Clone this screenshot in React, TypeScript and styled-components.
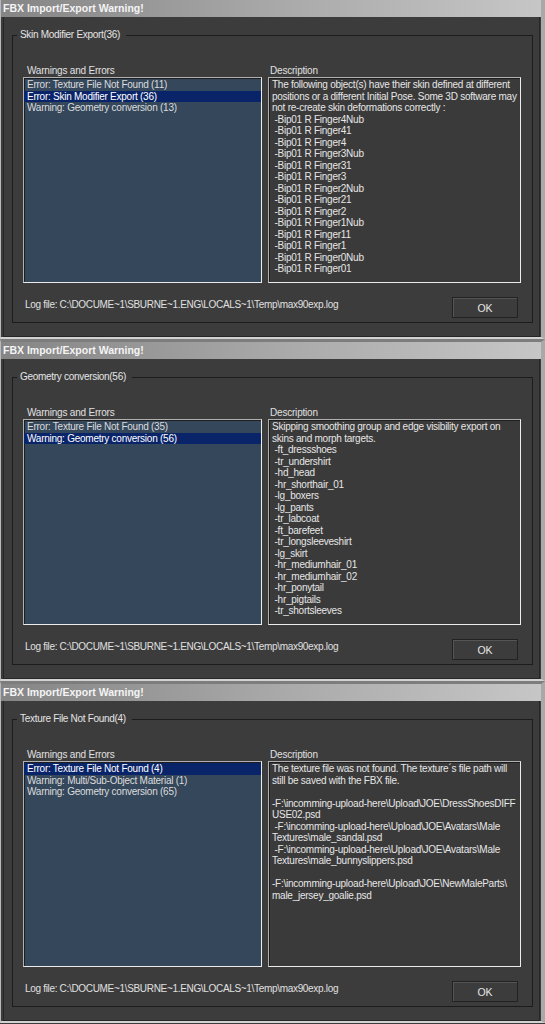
import React from 'react'
import styled, { createGlobalStyle } from 'styled-components'

const GlobalStyle = createGlobalStyle`
	html, body {
		margin: 0;
		padding: 0;
		background: #3c3c3c;
		overflow: hidden;
	}
	body {
		font-family: 'Liberation Sans', Arial, sans-serif;
	}
`

const Stack = styled.div`
	display: flex;
	flex-direction: column;
	width: 545px;
	margin-top: -3px;
`

const Window = styled.section`
	box-sizing: border-box;
	height: 342px;
	display: flex;
	flex-direction: column;
	background: #3c3c3c;
	border-top: 3px solid #7d7d7d;
	border-left: 1px solid #b9b9b9;
	border-right: 4px solid #a9a9a9;
	border-bottom: 2px solid #d2d2d2;
`

const TitleBar = styled.div`
	height: 17px;
	flex: none;
	padding-left: 2px;
	background: linear-gradient(90deg, #858585 0%, #a8a8a8 50%, #c6c6c6 100%);
	color: #f4f4f4;
	font-weight: bold;
	font-size: 10.5px;
	line-height: 17px;
	white-space: nowrap;
`

const Body = styled.div`
	box-sizing: border-box;
	height: 320px;
	margin: 0 1px 0 2px;
	padding: 12px 6px 0 8px;
	border: 1px solid #262626;
	border-top: none;
`

const Group = styled.fieldset`
	margin: 0;
	min-width: 0;
	padding: 24px 11px 4px 10px;
	border: 1px solid #1c1c1c;
	display: grid;
	grid-template-columns: 239px 253px;
	column-gap: 6px;
`

const GroupLabel = styled.legend`
	margin-left: -6px;
	padding: 0 6px 0 3px;
	font-size: 10px;
	line-height: 12px;
	letter-spacing: -0.3px;
	color: #e4e4e4;
`

const Column = styled.div`
	display: flex;
	flex-direction: column;
`

const ColumnLabel = styled.div<{ $indent: number }>`
	height: 12px;
	padding-left: ${(p) => p.$indent}px;
	font-size: 10px;
	line-height: 12px;
	letter-spacing: -0.2px;
	color: #e0e0e0;
`

const Inset = styled.div`
	box-sizing: border-box;
	height: 206px;
	border: 1px solid;
	border-color: #b0b0b0 #ececec #ececec #b0b0b0;
	box-shadow: inset 1px 1px 0 #1e1e1e;
	overflow: hidden;
	font-size: 10px;
	line-height: 11.5px;
	letter-spacing: -0.25px;
`

const ListBox = styled(Inset)`
	background: #34475b;
	padding: 1px 0;
`

const ListRow = styled.div<{ $selected: boolean }>`
	height: 11.5px;
	padding-left: 3px;
	white-space: nowrap;
	background: ${(p) => (p.$selected ? '#0a246a' : 'transparent')};
	color: ${(p) => (p.$selected ? '#ffffff' : '#dcdcdc')};
`

const DescBox = styled(Inset)`
	background: #3a3a3a;
	padding: 1px 3px;
	color: #e6e6e6;
`

const DescLine = styled.div`
	height: 11.5px;
	white-space: pre;
`

const Footer = styled.div`
	grid-column: 1 / -1;
	display: flex;
	justify-content: space-between;
	align-items: flex-start;
	margin-top: 14px;
	padding: 0 3px 0 2px;
`

const LogText = styled.div`
	padding-top: 2px;
	font-size: 10px;
	line-height: 12px;
	letter-spacing: -0.32px;
	color: #e0e0e0;
	white-space: nowrap;
`

const OkButton = styled.button`
	box-sizing: border-box;
	width: 66px;
	height: 21px;
	padding: 0;
	background: #3c3c3c;
	border: 1px solid #222222;
	box-shadow: inset 1px 1px 0 #555555;
	color: #e6e6e6;
	font-family: 'Liberation Sans', Arial, sans-serif;
	font-size: 10.5px;
`

type Dialog = {
	group: string
	items: string[]
	selected: number
	lines: string[]
}

const LOG = 'Log file: C:\\DOCUME~1\\SBURNE~1.ENG\\LOCALS~1\\Temp\\max90exp.log'

const dialogs: Dialog[] = [
	{
		group: 'Skin Modifier Export(36)',
		items: [
			'Error: Texture File Not Found (11)',
			'Error: Skin Modifier Export (36)',
			'Warning: Geometry conversion (13)',
		],
		selected: 1,
		lines: [
			'The following object(s) have their skin defined at different',
			'positions or a different Initial Pose. Some 3D software may',
			'not re-create skin deformations correctly :',
			' -Bip01 R Finger4Nub',
			' -Bip01 R Finger41',
			' -Bip01 R Finger4',
			' -Bip01 R Finger3Nub',
			' -Bip01 R Finger31',
			' -Bip01 R Finger3',
			' -Bip01 R Finger2Nub',
			' -Bip01 R Finger21',
			' -Bip01 R Finger2',
			' -Bip01 R Finger1Nub',
			' -Bip01 R Finger11',
			' -Bip01 R Finger1',
			' -Bip01 R Finger0Nub',
			' -Bip01 R Finger01',
		],
	},
	{
		group: 'Geometry conversion(56)',
		items: ['Error: Texture File Not Found (35)', 'Warning: Geometry conversion (56)'],
		selected: 1,
		lines: [
			'Skipping smoothing group and edge visibility export on',
			'skins and morph targets.',
			' -ft_dressshoes',
			' -tr_undershirt',
			' -hd_head',
			' -hr_shorthair_01',
			' -lg_boxers',
			' -lg_pants',
			' -tr_labcoat',
			' -ft_barefeet',
			' -tr_longsleeveshirt',
			' -lg_skirt',
			' -hr_mediumhair_01',
			' -hr_mediumhair_02',
			' -hr_ponytail',
			' -hr_pigtails',
			' -tr_shortsleeves',
		],
	},
	{
		group: 'Texture File Not Found(4)',
		items: [
			'Error: Texture File Not Found (4)',
			'Warning: Multi/Sub-Object Material (1)',
			'Warning: Geometry conversion (65)',
		],
		selected: 0,
		lines: [
			'The texture file was not found. The texture\u00b4s file path will',
			'still be saved with the FBX file.',
			' ',
			'-F:\\incomming-upload-here\\Upload\\JOE\\DressShoesDIFF',
			'USE02.psd',
			' -F:\\incomming-upload-here\\Upload\\JOE\\Avatars\\Male',
			'Textures\\male_sandal.psd',
			' -F:\\incomming-upload-here\\Upload\\JOE\\Avatars\\Male',
			'Textures\\male_bunnyslippers.psd',
			' ',
			'-F:\\incomming-upload-here\\Upload\\JOE\\NewMaleParts\\',
			'male_jersey_goalie.psd',
		],
	},
]

const WarningDialog = ({ dialog }: { dialog: Dialog }) => (
	<Window>
		<TitleBar>FBX Import/Export Warning!</TitleBar>
		<Body>
			<Group>
				<GroupLabel>{dialog.group}</GroupLabel>
				<Column>
					<ColumnLabel $indent={4}>Warnings and Errors</ColumnLabel>
					<ListBox>
						{dialog.items.map((item, i) => (
							<ListRow key={item} $selected={i === dialog.selected}>
								{item}
							</ListRow>
						))}
					</ListBox>
				</Column>
				<Column>
					<ColumnLabel $indent={2}>Description</ColumnLabel>
					<DescBox>
						{dialog.lines.map((line, i) => (
							<DescLine key={i}>{line}</DescLine>
						))}
					</DescBox>
				</Column>
				<Footer>
					<LogText>{LOG}</LogText>
					<OkButton>OK</OkButton>
				</Footer>
			</Group>
		</Body>
	</Window>
)

export default function App() {
	return (
		<>
			<GlobalStyle />
			<Stack>
				{dialogs.map((d) => (
					<WarningDialog key={d.group} dialog={d} />
				))}
			</Stack>
		</>
	)
}
